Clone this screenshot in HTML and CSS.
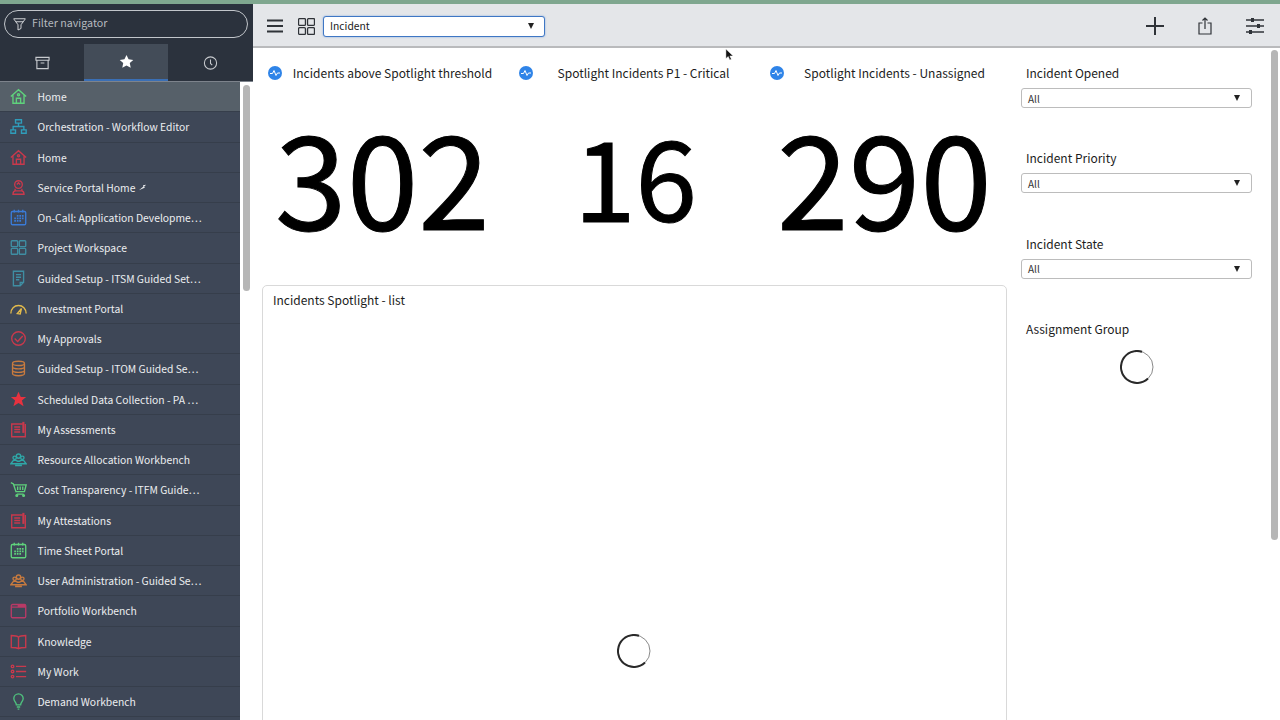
FILE: index.html
```html
<!DOCTYPE html>
<html lang="en">
<head>
<meta charset="utf-8">
<title>Incident Spotlight</title>
<link rel="stylesheet" href="styles.css">
</head>
<body>
<div class="stripe"></div>
<div class="app">
  <aside class="sidebar">
    <div class="filter-wrap">
      <div class="filter">
        <svg class="filter-icon" viewBox="0 0 20 20"><path d="M2 3h16M2.500 3.500 8 11v7l4-2v-5l5.500-7.500M5 7h10"/></svg>
        <span>Filter navigator</span>
      </div>
    </div>
    <div class="tabs">
      <div class="tab">
        <svg class="tab-icon" viewBox="0 0 16 14"><path d="M1 1h14v3H1zM2 4v9h12V4M6 7h4"/></svg>
      </div>
      <div class="tab tab-active">
        <svg class="tab-star" viewBox="0 0 16 16"><path d="M8 1l2.200 4.700 5 .6-3.700 3.400 1 5L8 12.200 3.500 14.700l1-5L.8 6.300l5-.6z"/></svg>
      </div>
      <div class="tab">
        <svg class="tab-icon" viewBox="0 0 16 16"><circle cx="8" cy="8" r="7"/><path d="M8 4v4.500l2 2"/></svg>
      </div>
    </div>
    <div class="nav-body">
      <nav class="nav">
        <div class="row row-active c-green"><svg viewBox="0 0 20 20"><path d="M1 10l9-8 9 8M3.500 8.500V18h13V8.500M7.500 18v-6h5v6"/><circle cx="10" cy="8" r="1.300"/></svg><span>Home</span></div>
        <div class="row c-teal"><svg viewBox="0 0 20 20"><path d="M6.500 2h7v4h-7zM1 14h5.500v4H1zM13.500 14H19v4h-5.500zM10 6v4M3.700 14v-4h12.600v4"/></svg><span>Orchestration - Workflow Editor</span></div>
        <div class="row c-red"><svg viewBox="0 0 20 20"><path d="M1 10l9-8 9 8M3.500 8.500V18h13V8.500M7.500 18v-6h5v6"/><circle cx="10" cy="8" r="1.300"/></svg><span>Home</span></div>
        <div class="row c-red"><svg viewBox="0 0 20 20"><circle cx="10" cy="6.500" r="4.500"/><path d="M8 6.500l2-2 2 2M6 11.500v2.500h8v-2.500M3.500 18c0-2 1-4 3-4h7c2 0 3 2 3 4z"/></svg><span>Service Portal Home<svg class="ext" viewBox="0 0 10 10"><path d="M1 8l7-3-1.500-.5L9 2 5.500 2.500 6 4z"/></svg></span></div>
        <div class="row c-blue"><svg viewBox="0 0 20 20"><rect x="1.500" y="3" width="17" height="15.500" rx="1.500"/><path d="M5 1v3M10 1v3M15 1v3"/><path class="fill" d="M8 7h2v2H8zM11 7h2v2h-2zM14 7h2v2h-2zM5 10h2v2H5zM8 10h2v2H8zM11 10h2v2h-2zM14 10h2v2h-2zM5 13h2v2H5zM8 13h2v2H8zM11 13h2v2h-2z"/></svg><span>On-Call: Application Developme…</span></div>
        <div class="row c-cyan"><svg viewBox="0 0 20 20"><rect x="1.500" y="2" width="7.500" height="7" rx="1"/><rect x="11" y="2" width="7.500" height="7" rx="1"/><rect x="1.500" y="11" width="7.500" height="7" rx="1"/><rect x="11" y="11" width="7.500" height="7" rx="1"/></svg><span>Project Workspace</span></div>
        <div class="row c-cyan"><svg viewBox="0 0 20 20"><path d="M4 1.500h12v13l-4 4H4zM16 14.500h-4v4M7 5.500h6M7 8.500h6M7 11.500h4"/></svg><span>Guided Setup - ITSM Guided Set…</span></div>
        <div class="row c-yellow"><svg viewBox="0 0 20 20"><path d="M1 16c0-6 4-9.500 9-9.500s9 3.500 9 9.500M8.500 16l5-6-1.500 6.500z"/></svg><span>Investment Portal</span></div>
        <div class="row c-red"><svg viewBox="0 0 20 20"><circle cx="10" cy="10" r="8"/><path d="M5.500 10l3.500 3.500 6-6.500"/></svg><span>My Approvals</span></div>
        <div class="row c-orange"><svg viewBox="0 0 20 20"><ellipse cx="10" cy="4" rx="7" ry="2.500"/><path d="M3 4v12c0 1.400 3 2.500 7 2.500s7-1.100 7-2.500V4M3 8c0 1.400 3 2.500 7 2.500s7-1.100 7-2.500M3 12c0 1.400 3 2.500 7 2.500s7-1.100 7-2.500"/></svg><span>Guided Setup - ITOM Guided Se…</span></div>
        <div class="row c-brightred"><svg viewBox="0 0 20 20"><path class="fill" d="M10 1l2.700 6h6.300l-5 4.200 2 6.800-6-3.800L4 18l2-6.800L1 7h6.300z"/></svg><span>Scheduled Data Collection - PA …</span></div>
        <div class="row c-red"><svg viewBox="0 0 20 20"><path d="M15 3.500H2v15h16V3.500M5 7h7M5 10h7M5 13h7"/><path class="fill" d="M14.500 1H17v13h-2.500z"/></svg><span>My Assessments</span></div>
        <div class="row c-cyan2"><svg viewBox="0 0 20 20"><circle cx="5.500" cy="8" r="2"/><circle cx="14.500" cy="8" r="2"/><circle cx="10" cy="6" r="2.500"/><path d="M1 15l3-4h3l2 1h2l2-1h3l3 4zM6 17h8"/></svg><span>Resource Allocation Workbench</span></div>
        <div class="row c-green"><svg viewBox="0 0 20 20"><path d="M1 2l3 1.500 3 9h10l2-8H5M8 15.500h8"/><path d="M9 6.500v4M12 6.500v4M15 6.500v4"/><circle cx="8" cy="17" r="1"/><circle cx="16" cy="17" r="1"/></svg><span>Cost Transparency - ITFM Guide…</span></div>
        <div class="row c-red"><svg viewBox="0 0 20 20"><path d="M15 3.500H2v15h16V3.500M5 7h7M5 10h7M5 13h7"/><path class="fill" d="M14.500 1H17v13h-2.500z"/></svg><span>My Attestations</span></div>
        <div class="row c-green"><svg viewBox="0 0 20 20"><rect x="1.500" y="3" width="17" height="15.500" rx="1.500"/><path d="M5 1v3M10 1v3M15 1v3"/><path class="fill" d="M8 7h2v2H8zM11 7h2v2h-2zM14 7h2v2h-2zM5 10h2v2H5zM8 10h2v2H8zM11 10h2v2h-2zM14 10h2v2h-2zM5 13h2v2H5zM8 13h2v2H8zM11 13h2v2h-2z"/></svg><span>Time Sheet Portal</span></div>
        <div class="row c-orange"><svg viewBox="0 0 20 20"><circle cx="5.500" cy="8" r="2"/><circle cx="14.500" cy="8" r="2"/><circle cx="10" cy="6" r="2.500"/><path d="M1 15l3-4h3l2 1h2l2-1h3l3 4zM6 17h8"/></svg><span>User Administration - Guided Se…</span></div>
        <div class="row c-pink"><svg viewBox="0 0 20 20"><path d="M1.500 4.500a1.500 1.500 0 0 1 1.500-1.500h14a1.500 1.500 0 0 1 1.500 1.500V17a1.500 1.500 0 0 1-1.500 1.500H3A1.500 1.500 0 0 1 1.500 17zM1.500 6h17"/><path class="fill" d="M9 3h9v3H9z"/></svg><span>Portfolio Workbench</span></div>
        <div class="row c-red"><svg viewBox="0 0 20 20"><path d="M10 5c-1.500-1.500-4-2-8.500-2v14c4.500 0 7 .5 8.500 1.500 1.500-1 4-1.500 8.500-1.500V3C14 3 11.500 3.500 10 5zM10 5v13"/></svg><span>Knowledge</span></div>
        <div class="row c-red"><svg viewBox="0 0 20 20"><circle cx="3" cy="4" r="1.500"/><circle cx="3" cy="10" r="1.500"/><circle cx="3" cy="16" r="1.500"/><path d="M7 4h12M7 10h12M7 16h12"/></svg><span>My Work</span></div>
        <div class="row c-green2"><svg viewBox="0 0 20 20"><path d="M7.500 14c0-3-3-4-3-7.500a5.500 5.500 0 0 1 11 0c0 3.500-3 4.500-3 7.500zM8 16.500h4M9 19h2"/></svg><span>Demand Workbench</span></div>
      </nav>
      <div class="nav-scroll"><div class="nav-thumb"></div></div>
    </div>
  </aside>
  <main class="main">
    <header class="topbar">
      <svg class="bar-icon burger" viewBox="0 0 16 14"><path d="M0 1.500h16M0 7h16M0 12.500h16"/></svg>
      <svg class="bar-icon grid-icon" viewBox="0 0 16 16"><rect x=".5" y=".5" width="6.500" height="6.500" rx="1"/><rect x="9" y=".5" width="6.500" height="6.500" rx="1"/><rect x=".5" y="9" width="6.500" height="6.500" rx="1"/><rect x="9" y="9" width="6.500" height="6.500" rx="1"/></svg>
      <div class="dash-select"><span>Incident</span><i class="caret"></i></div>
      <div class="bar-right">
        <svg class="bar-icon plus" viewBox="0 0 18 18"><path d="M9 0v18M0 9h18"/></svg>
        <svg class="bar-icon share" viewBox="0 0 14 18"><path d="M4.500 6H1v11h12V6H9.500M7 12V1M4.500 3.500 7 1l2.500 2.500"/></svg>
        <svg class="bar-icon tune" viewBox="0 0 18 18"><path d="M0 3h18M0 9h18M0 15h18"/><path class="dark" d="M5 1h3v4H5zM11 7h3v4h-3zM3 13h3v4H3z"/></svg>
      </div>
    </header>
    <div class="content">
      <div class="canvas">
        <div class="left">
          <div class="scores">
            <section class="score">
              <div class="score-head"><svg class="pulse" viewBox="0 0 14 14"><circle cx="7" cy="7" r="7"/><path d="M2 7.500h2.500L6 4.500l2 5 1.500-2.500H12"/></svg><h2>Incidents above Spotlight threshold</h2></div>
              <div class="score-num">302</div>
            </section>
            <section class="score">
              <div class="score-head"><svg class="pulse" viewBox="0 0 14 14"><circle cx="7" cy="7" r="7"/><path d="M2 7.500h2.500L6 4.500l2 5 1.500-2.500H12"/></svg><h2>Spotlight Incidents P1 - Critical</h2></div>
              <div class="score-num score-num-small">16</div>
            </section>
            <section class="score">
              <div class="score-head"><svg class="pulse" viewBox="0 0 14 14"><circle cx="7" cy="7" r="7"/><path d="M2 7.500h2.500L6 4.500l2 5 1.500-2.500H12"/></svg><h2>Spotlight Incidents - Unassigned</h2></div>
              <div class="score-num">290</div>
            </section>
          </div>
          <section class="list-card">
            <h2>Incidents Spotlight - list</h2>
            <svg class="spinner list-spinner" viewBox="0 0 34 34"><circle cx="17" cy="17" r="16"/><path d="M22 1.800A16 16 0 1 0 28 28.600"/></svg>
          </section>
        </div>
        <div class="filters">
          <div class="filter-block"><h2>Incident Opened</h2><div class="select"><span>All</span><i class="caret"></i></div></div>
          <div class="filter-block"><h2>Incident Priority</h2><div class="select"><span>All</span><i class="caret"></i></div></div>
          <div class="filter-block"><h2>Incident State</h2><div class="select"><span>All</span><i class="caret"></i></div></div>
          <div class="filter-block"><h2>Assignment Group</h2>
            <svg class="spinner group-spinner" viewBox="0 0 34 34"><circle cx="17" cy="17" r="16"/><path d="M22 1.800A16 16 0 1 0 28 28.600"/></svg>
          </div>
        </div>
      </div>
      <div class="main-scroll"><div class="main-thumb"></div></div>
    </div>
  </main>
</div>
<svg class="cursor" viewBox="0 0 10 14"><path d="M1 1v10.500l2.600-2.300 1.700 3.800 1.800-.8-1.700-3.600H9z"/></svg>
</body>
</html>
```
FILE: styles.css
```css
* { box-sizing: border-box; }
html, body { margin: 0; height: 720px; overflow: hidden; }
body {
  font-family: "Noto Sans CJK SC", "Noto Sans", sans-serif;
  background: #fff;
  color: #111;
  display: flex;
  flex-direction: column;
}
h2 { margin: 0; font-size: 12px; font-weight: 400; color: #1c1c1c; line-height: 18px; }

.stripe { height: 4px; background: #7fa78f; flex: none; }
.app { flex: 1; display: flex; min-height: 0; }

.sidebar { width: 253px; flex: none; display: flex; flex-direction: column; background: #2b323d; }
.filter-wrap { height: 40px; padding: 6px 5px 6px 4px; flex: none; }
.filter {
  height: 28px; border: 1px solid #c2c6cb; border-radius: 14px;
  display: flex; align-items: center; padding-left: 7px; gap: 5px;
  color: #b5b9bf; font-size: 10.700px; width: 244px;
}
.filter span { margin-top: -3px; }
.filter-icon { width: 15px; height: 16px; fill: none; stroke: #d4d6d9; stroke-width: 1.300; }
.tabs { display: flex; height: 38px; flex: none; width: 253px; border-bottom: 1px solid #7d838c; }
.tab { width: 84px; display: flex; align-items: center; justify-content: center; }
.tab-active { background: #434c58; border-bottom: 2px solid #3a6fb5; }
.tab-icon { width: 15px; height: 14px; fill: none; stroke: #c8cbcf; stroke-width: 1.200; }
.tab-star { width: 15px; height: 15px; fill: #fff; }

.nav-body { flex: 1; display: flex; min-height: 0; background: #fff; }
.nav { width: 240px; flex: none; background: #3e4757; overflow: hidden; }
.nav-scroll { flex: 1; padding: 3px 3px 0 3px; }
.nav-thumb { width: 7px; height: 206px; background: #b6b6b6; border-radius: 4px; }
.row {
  height: 30.250px; border-bottom: 1px solid #363e4b;
  display: flex; align-items: center; padding-left: 10px; gap: 10.500px;
  font-size: 10.350px; color: #e8eaec;
}
.row > svg { width: 17px; height: 17px; fill: none; stroke: currentColor; stroke-width: 1.600; flex: none; }
.row > svg .fill { fill: currentColor; stroke: none; }
.row span { color: #eceef0; white-space: nowrap; display: flex; align-items: center; }
.row-active { background: #566069; }
.ext { width: 9px; height: 9px; margin-left: 3px; fill: #e8eaec; }
.c-green { color: #5fd27c; }
.c-green2 { color: #4fc27e; }
.c-teal { color: #2f9dbb; }
.c-red { color: #c9394c; }
.c-brightred { color: #e8323f; }
.c-blue { color: #3a7bd8; }
.c-cyan { color: #3f8ea3; }
.c-cyan2 { color: #2fa8a8; }
.c-yellow { color: #e3bb4c; }
.c-orange { color: #c87b3f; }
.c-pink { color: #b83a66; }

.main { flex: 1; min-width: 0; display: flex; flex-direction: column; }
.topbar {
  height: 44px; flex: none; background: #e4e6e9; border-bottom: 2px solid #b9babc;
  display: flex; align-items: center; padding: 2px 0 0 14px;
}
.bar-icon { fill: none; stroke: #2f3338; flex: none; }
.burger { width: 16px; height: 14px; stroke-width: 2.200; }
.grid-icon { width: 17px; height: 17px; margin-left: 15px; stroke-width: 1.200; }
.dash-select {
  width: 222px; height: 21px; margin-left: 8px; background: #fff;
  border: 1px solid #3f77c4; border-radius: 3px; box-shadow: 0 0 2px #7ea6dc;
  display: flex; align-items: center; justify-content: space-between;
  padding: 0 10px 0 6px; font-size: 10.300px; color: #222;
}
.dash-select span { margin-top: -2px; }
.caret { width: 0; height: 0; border-left: 3.500px solid transparent; border-right: 3.500px solid transparent; border-top: 6px solid #222; }
.bar-right { margin-left: auto; display: flex; align-items: center; padding-right: 16px; }
.plus { width: 18px; height: 18px; stroke-width: 2; margin-right: 34px; }
.share { width: 14px; height: 18px; stroke-width: 1.200; margin-right: 34px; }
.tune { width: 18px; height: 18px; stroke-width: 1.300; }
.tune .dark { fill: #2f3338; stroke: none; }

.content { flex: 1; display: flex; min-height: 0; }
.canvas { flex: 1; display: flex; min-width: 0; padding: 12px 0 0 9px; }
.left { width: 745px; flex: none; }
.scores { display: flex; height: 225px; margin-right: -8px; padding-left: 1px; }
.score { width: 251px; flex: none; }
.score-head { display: flex; align-items: center; height: 26px; padding-left: 5px; width: 239px; }
.score-head h2 { flex: 1; text-align: center; white-space: nowrap; padding-left: 1px; }
.pulse { width: 14px; height: 14px; flex: none; fill: #2f84e8; }
.pulse path { fill: none; stroke: #fff; stroke-width: 1; }
.score-num {
  font-size: 129px; line-height: 160px; text-align: center; width: 239px; color: #000;
  margin-top: 8px; -webkit-text-stroke: 1px #000;
}
.score-num-small { font-size: 111px; padding-left: 4px; }
.list-card {
  height: 500px; border: 1px solid #d9d9d9; border-radius: 5px 5px 0 0;
  padding: 5px 10px; display: flex; flex-direction: column; align-items: center;
}
.list-card h2 { align-self: flex-start; }
.spinner { width: 34px; height: 34px; fill: none; stroke: #2a2a2a; stroke-width: 2; flex: none; }
.spinner circle { stroke: #8a8a8a; stroke-width: 1; }
.list-spinner { margin-top: 325px; margin-left: -1px; }

.filters { width: 232px; flex: none; margin-left: 14px; }
.filter-block { height: 85.300px; padding-top: 4px; }
.filter-block h2 { padding-left: 5px; }
.select {
  height: 20px; margin-top: 6px; width: 231px; border: 1px solid #bcbcbc; border-radius: 3px;
  display: flex; align-items: center; justify-content: space-between;
  padding: 0 11px 0 6px; font-size: 10px; color: #333;
}
.group-spinner { display: block; margin: 12px 0 0 99px; }

.main-scroll { width: 17px; flex: none; padding: 2px 2px 0 8px; }
.main-thumb { width: 7px; height: 490px; background: #b6b6b6; border-radius: 4px; }

.cursor { position: absolute; left: 725px; top: 48px; width: 9px; height: 13px; fill: #111; stroke: #fff; stroke-width: .5; }
```
